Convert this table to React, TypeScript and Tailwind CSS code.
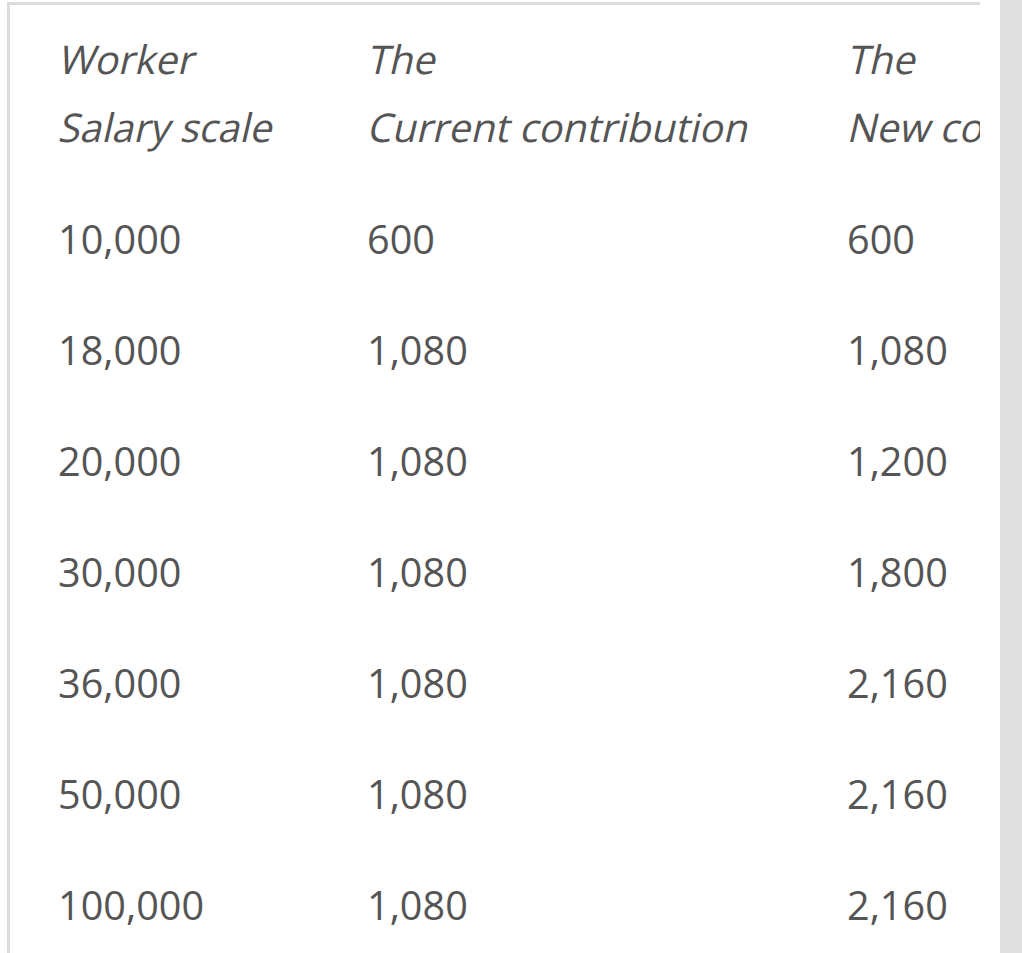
const rows = [
  ["10,000", "600", "600"],
  ["18,000", "1,080", "1,080"],
  ["20,000", "1,080", "1,200"],
  ["30,000", "1,080", "1,800"],
  ["36,000", "1,080", "2,160"],
  ["50,000", "1,080", "2,160"],
  ["100,000", "1,080", "2,160"],
]

const headers = [
  ["Worker", "Salary scale"],
  ["The", "Current contribution"],
  ["The", "New contribution"],
]

export default function App() {
  return (
    <div className="flex h-[953px] w-[1022px] overflow-hidden bg-white font-['Open_Sans',sans-serif] text-[#555]">
      <div className="flex-1 pl-[7px] pt-[2px]">
        <div className="w-[973px] overflow-hidden border-l-[3px] border-t-[3px] border-[#dcdcdc]">
          <table className="w-[1400px] table-fixed border-collapse text-[39.6px] leading-[68px]">
            <colgroup>
              <col className="w-[309px]" />
              <col className="w-[480px]" />
              <col className="w-[611px]" />
            </colgroup>
            <thead>
              <tr>
                {headers.map((h, i) => (
                  <th key={i} className="pl-[47px] pt-[20px] pb-[22px] text-left font-normal">
                    {/* regular face slanted, like the source's faux italic */}
                    {h.map((line, k) => (
                      <span key={k} className="block origin-[0_50px] -skew-x-[13deg] whitespace-nowrap">
                        {line}
                      </span>
                    ))}
                  </th>
                ))}
              </tr>
            </thead>
            <tbody>
              {rows.map((r, i) => (
                <tr key={i}>
                  {r.map((c, j) => (
                    <td key={j} className="py-[21.5px] pl-[48px]">{c}</td>
                  ))}
                </tr>
              ))}
            </tbody>
          </table>
        </div>
      </div>
      <div className="w-[22px] bg-[#e0dfe0]" />
    </div>
  )
}
